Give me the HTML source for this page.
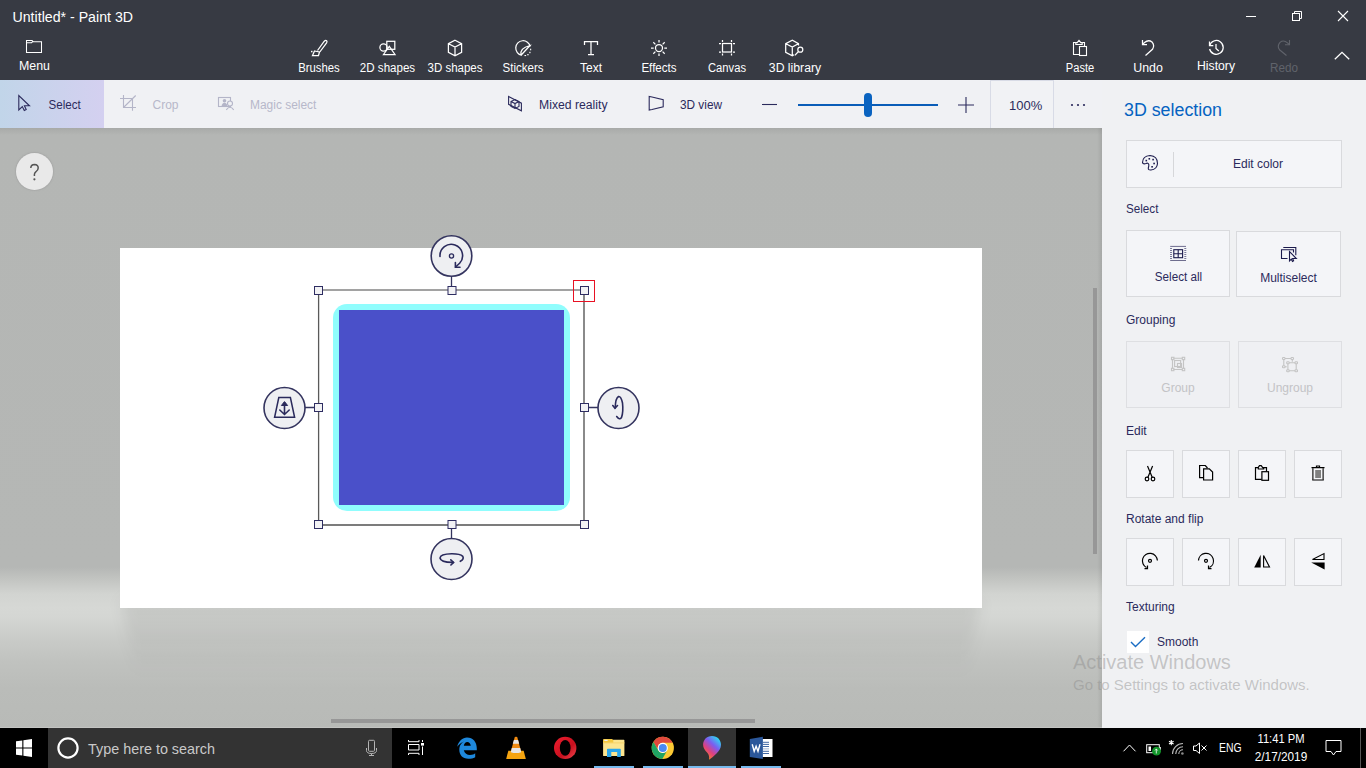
<!DOCTYPE html>
<html><head><meta charset="utf-8">
<style>
*{margin:0;padding:0;box-sizing:border-box}
html,body{width:1366px;height:768px;overflow:hidden;background:#b5b6b5;font-family:"Liberation Sans",sans-serif}
.a{position:absolute}
#top{left:0;top:0;width:1366px;height:80px;background:#373a43}
#tb{left:0;top:80px;width:1102px;height:48px;background:#f0f1f4}
#sel{left:0;top:80px;width:104px;height:48px;background:linear-gradient(to right,#c1d5e9,#d4d0f0)}
#zoombox{left:990px;top:80px;width:64px;height:48px;border:1px solid #d8dbe6;border-bottom:none;background:#f1f2f5}
#cv{left:0;top:128px;width:1102px;height:600px;overflow:hidden;
 background:linear-gradient(to bottom,#a8aaa8 0px,#b4b6b4 7px,#b5b7b5 439px,#c3c5c2 452px,#d2d4d1 466px,#d6d8d5 480px,#d4d6d3 490px,#c8cac7 514px,#c0c2bf 534px,#babcb9 560px,#b8bab7 600px)}
#canvas{left:120px;top:120px;width:862px;height:360px;background:#fff}
#panel{left:1102px;top:80px;width:264px;height:648px;background:#f0f1f3}
.card{position:absolute;background:#f4f5f8;border:1px solid #d9dadd}
.dcard{position:absolute;background:#eff0f3;border:1px solid #dedfe2}
#task{left:0;top:728px;width:1366px;height:40px;background:#000}
#search{left:48px;top:728px;width:344px;height:40px;background:#333}
#act{left:688px;top:728px;width:48px;height:40px;background:#333}
.ul{position:absolute;top:766px;height:2px;background:#76b9ed}
svg#ov{position:absolute;left:0;top:0;width:1366px;height:768px;overflow:visible}
text{font-family:"Liberation Sans",sans-serif}
</style></head><body>
<div id="top" class="a"></div>
<div id="tb" class="a"></div>
<div id="sel" class="a"></div>
<div id="zoombox" class="a"></div>
<div id="cv" class="a">
  <svg class="a" style="left:0;top:0" width="1102" height="600" viewBox="0 128 1102 600">
<defs><linearGradient id="shg" x1="0" y1="0" x2="0" y2="1"><stop offset="0" stop-color="#000" stop-opacity=".085"/><stop offset=".5" stop-color="#000" stop-opacity=".045"/><stop offset="1" stop-color="#000" stop-opacity="0"/></linearGradient>
<filter id="blr" x="-10%" y="-50%" width="120%" height="200%"><feGaussianBlur stdDeviation="7"/></filter></defs>
<polygon points="121,600 981,600 966,675 136,675" fill="url(#shg)" filter="url(#blr)"/>
</svg>
  <div id="canvas" class="a"></div>
  <div class="a" style="left:1093px;top:160px;width:4px;height:266px;background:#979797"></div>
  <div class="a" style="left:1097px;top:0;width:5px;height:600px;background:linear-gradient(to right,rgba(0,0,0,0),rgba(0,0,0,.08))"></div>
  <div class="a" style="left:331px;top:591px;width:424px;height:4px;background:#979797"></div>
  <div class="a" style="left:0;top:599px;width:1102px;height:1px;background:#c3c4c2"></div>
  <div class="a" style="left:16px;top:25px;width:37px;height:37px;border-radius:50%;background:#e9e9e9;box-shadow:0 0 1px 1px rgba(160,160,160,.5)"></div>
</div>
<div id="panel" class="a">
  <div class="card" style="left:24px;top:60px;width:216px;height:48px"></div>
  <div class="a" style="left:71px;top:72px;width:1px;height:25px;background:#d6d7da"></div>
  <div class="card" style="left:24px;top:150px;width:104px;height:67px"></div>
  <div class="card" style="left:134px;top:151px;width:105px;height:66px"></div>
  <div class="dcard" style="left:24px;top:261px;width:104px;height:67px"></div>
  <div class="dcard" style="left:136px;top:261px;width:104px;height:67px"></div>
  <div class="card" style="left:24px;top:370px;width:48px;height:48px"></div>
  <div class="card" style="left:80px;top:370px;width:48px;height:48px"></div>
  <div class="card" style="left:136px;top:370px;width:48px;height:48px"></div>
  <div class="card" style="left:192px;top:370px;width:48px;height:48px"></div>
  <div class="card" style="left:24px;top:458px;width:48px;height:48px"></div>
  <div class="card" style="left:80px;top:458px;width:48px;height:48px"></div>
  <div class="card" style="left:136px;top:458px;width:48px;height:48px"></div>
  <div class="card" style="left:192px;top:458px;width:48px;height:48px"></div>
  <div class="a" style="left:25px;top:551px;width:22px;height:22px;background:#fff"></div>
</div>
<div id="task" class="a"></div>
<div id="search" class="a"></div>
<div id="act" class="a"></div>
<div class="ul" style="left:594px;width:40px"></div>
<div class="ul" style="left:643px;width:40px"></div>
<div class="ul" style="left:688px;width:48px"></div>
<div class="ul" style="left:741px;width:40px"></div>

<svg id="ov" viewBox="0 0 1366 768">
<!-- ===== title bar text ===== -->
<g fill="#fff">
<text x="12.5" y="22" font-size="14" textLength="120.5" lengthAdjust="spacingAndGlyphs">Untitled* - Paint 3D</text>
<g font-size="12" text-anchor="middle">
<text x="34.5" y="70" textLength="31" lengthAdjust="spacingAndGlyphs">Menu</text>
<text x="319" y="72" textLength="41.5" lengthAdjust="spacingAndGlyphs">Brushes</text>
<text x="387.5" y="72" textLength="55.3" lengthAdjust="spacingAndGlyphs">2D shapes</text>
<text x="455" y="72" textLength="55" lengthAdjust="spacingAndGlyphs">3D shapes</text>
<text x="523" y="72" textLength="41" lengthAdjust="spacingAndGlyphs">Stickers</text>
<text x="591" y="72" textLength="22" lengthAdjust="spacingAndGlyphs">Text</text>
<text x="659" y="72" textLength="35.2" lengthAdjust="spacingAndGlyphs">Effects</text>
<text x="727" y="72" textLength="38" lengthAdjust="spacingAndGlyphs">Canvas</text>
<text x="795" y="72" textLength="52.3" lengthAdjust="spacingAndGlyphs">3D library</text>
<text x="1080" y="72" textLength="28.4" lengthAdjust="spacingAndGlyphs">Paste</text>
<text x="1148" y="72" textLength="29.6" lengthAdjust="spacingAndGlyphs">Undo</text>
<text x="1216" y="70" textLength="38" lengthAdjust="spacingAndGlyphs">History</text>
<text x="1284" y="72" fill="#60636b" textLength="28" lengthAdjust="spacingAndGlyphs">Redo</text>
</g>
</g>

<!-- ===== top icons (white) ===== -->
<g fill="none" stroke="#fff" stroke-width="1.25">
<!-- menu folder -->
<path d="M26.5,52.5 V40.5 H32 L33.2,41.7 H41.5 V52.5 Z M26.5,42.7 H31.6 L32.6,41.7" stroke-width="1.05"/>
<!-- brush -->
<path d="M317.5,50.5 L324.3,41.2 Q325.6,39.8 326.6,40.7 Q327.4,41.6 326.6,42.9 L319.8,52"/>
<path d="M314.5,51 L319.5,52 L318.5,55.5 L312.5,55.5 Z"/>
<!-- 2D shapes -->
<rect x="386.8" y="41.3" width="8" height="8"/>
<circle cx="383.5" cy="47.5" r="3.6"/>
<path d="M389.3,46.3 L383.5,54.5 H395 Z"/>
<!-- 3D shapes -->
<path d="M455,40.3 L461.6,43.6 V52.4 L455,55.7 L448.4,52.4 V43.6 Z M448.6,43.7 L455,47 L461.4,43.7 M455,47 V55.5"/>
<!-- stickers -->
<path d="M521.7,55.2 A7.3,7.3 0 1 1 530.2,46.5"/>
<path d="M521,55.2 Q519.5,48 530,45.5 L521,55.2"/>
<!-- text T -->
<path d="M584.5,45 V41.5 H597.5 V45 M591,41.5 V54.5 M588,54.5 H594"/>
<!-- effects sun -->
<circle cx="659" cy="48" r="3.5"/>
<path d="M659,40 V42.5 M659,53.5 V56 M651,48 H653.7 M664.3,48 H667 M653.3,42.3 L655.4,44.4 M662.6,51.6 L664.7,53.7 M664.7,42.3 L662.6,44.4 M655.4,51.6 L653.3,53.7"/>
<!-- canvas -->
<rect x="722.5" y="43.5" width="9" height="8.5"/>
<path d="M722.5,40 V42 M731.5,40 V42 M722.5,53.5 V55.5 M731.5,53.5 V55.5 M719,43.5 H721 M733,43.5 H735 M719,52 H721 M733,52 H735"/>
<!-- 3d library -->
<path d="M798.5,45.5 V43.6 L792.3,40.3 L785.7,43.6 V52.4 L792.3,55.7 L794,54.8 M785.9,43.7 L792.3,47 L798.3,43.7 M792.3,47 V55.5"/>
<circle cx="800.3" cy="49.7" r="2.5"/>
<path d="M798.5,51.5 L794.8,55.4"/>
<!-- paste -->
<path d="M1079.5,54.5 H1073.5 V42.5 H1075.8 M1082.2,42.5 H1084.5 V46.3" stroke-width="1.1"/>
<path d="M1075.8,44.5 V42.6 H1077.2 L1079,40.4 L1080.8,42.6 H1082.2 V44.5 Z" stroke-width="1.1"/>
<rect x="1079.5" y="46.5" width="7" height="9" stroke-width="1.1"/>
<!-- undo -->
<path d="M1142.5,40 V44.5 H1147"/>
<path d="M1142.8,44.2 L1144.5,42.5 Q1148.5,39.3 1152,42 Q1155,45.5 1152.5,49.3 L1145.5,55.5"/>
<!-- history -->
<path d="M1209.6,45.8 A6.9,6.9 0 1 1 1209.6,49"/>
<path d="M1209.5,41.5 V45.6 H1213.3"/>
<path d="M1216,44 V48.5 L1218.8,51"/>
<!-- chevron -->
<path d="M1334.8,59.3 L1342,52.3 L1349.2,59.3" stroke-width="1.3"/>
<!-- window controls -->
<path d="M1246,16.5 H1256" stroke-width="1"/>
<rect x="1292.5" y="13.5" width="7" height="7" stroke-width="1"/>
<path d="M1294.5,13.5 V11.5 H1301.5 V18.5 H1299.5" stroke-width="1"/>
<path d="M1338,11 L1348,21 M1348,11 L1338,21" stroke-width="1.1"/>
</g>
<g fill="none" stroke="#60636b" stroke-width="1.1">
<path d="M1289.5,40 V44.8 H1285"/>
<path d="M1289.2,44.5 L1287.5,42.8 Q1283.5,39.4 1280,42.3 Q1276.8,46 1279.5,49.8 L1286.5,55.5"/>
</g>
<g fill="#fff"><rect x="311" y="50.8" width="1.5" height="1.5"/></g>

<g fill="#fff"><rect x="524.5" y="55" width="1.6" height="1.1"/><rect x="527.3" y="54" width="1.3" height="1.3"/><rect x="529.3" y="51.8" width="1.2" height="1.4"/><rect x="530.1" y="48.7" width="1.1" height="1.6"/></g>
<!-- ===== light toolbar ===== -->
<g font-size="12" fill="#2b2a5c">
<text x="48.5" y="109.2" textLength="32.2" lengthAdjust="spacingAndGlyphs">Select</text>
<text x="539" y="109.2" textLength="68.5" lengthAdjust="spacingAndGlyphs">Mixed reality</text>
<text x="680" y="109.2" textLength="42" lengthAdjust="spacingAndGlyphs">3D view</text>
<text x="1009" y="109.5" font-size="13">100%</text>
</g>
<g font-size="12" fill="#b7b8ca">
<text x="152.5" y="109.2" textLength="26" lengthAdjust="spacingAndGlyphs">Crop</text>
<text x="250" y="109.2" textLength="66.4" lengthAdjust="spacingAndGlyphs">Magic select</text>
</g>
<g fill="none" stroke="#2b2a5c" stroke-width="1.1">
<path d="M18.8,95.5 V110 L22.3,106.6 L24.3,110.5 L26.2,109.6 L24.4,105.8 H29.5 Z"/>
<path d="M508.6,96.5 L521.4,103.2 V110.8 L508.6,104.3 Z"/>
<path d="M511,101.5 L515,99.6 L519,101.6 V106.5 L515,108.4 L511,106.4 Z M511,101.6 L515,103.6 L519,101.6 M515,103.6 V108.3"/>
<path d="M649.2,96.5 V110 L652,109.5 L663.2,106.8 V99.6 L652,97 Z"/>
<path d="M762,104.5 H777"/>
<path d="M966,97 V113 M958,105 H974"/>
</g>
<g fill="#2b2a5c"><circle cx="1072" cy="105" r="1.1"/><circle cx="1078" cy="105" r="1.1"/><circle cx="1084" cy="105" r="1.1"/></g>
<g fill="none" stroke="#b4b5c8" stroke-width="1.1">
<path d="M120,98.5 H132.5 V110.8 M123.5,95 V107.5 H136 M124,107 L135.7,95.5"/>
<rect x="218.5" y="97.5" width="12" height="9"/>
</g>
<g fill="#b4b5c8"><circle cx="224.5" cy="100.8" r="1.8"/><path d="M221.5,106.5 Q222,102.8 224.5,102.8 Q227,102.8 227.5,106.5 Z"/></g>
<circle cx="230" cy="103.5" r="2.5" fill="#f0f1f4" stroke="#b4b5c8" stroke-width="1.1"/>
<path d="M226.3,109.8 Q230,104.8 233.7,109.8" fill="none" stroke="#b4b5c8" stroke-width="1.1"/>
<path d="M798,105 H938" stroke="#0a5db8" stroke-width="2.2"/>
<rect x="864" y="93" width="8" height="24" rx="4" fill="#0a63c0"/>

<!-- ===== help ===== -->
<path d="M30.8,168 Q31,164.6 34.5,164.6 Q38.2,164.8 38.2,168 Q38.2,170.3 35.8,171.8 Q34.4,172.8 34.4,174.5 V176" fill="none" stroke="#555" stroke-width="1.5"/><circle cx="34.4" cy="179.3" r="1.1" fill="#555"/>

<!-- ===== selection object ===== -->
<rect x="333" y="304" width="237" height="207" rx="14" fill="#90fdfd"/>
<rect x="339" y="310" width="225" height="195" fill="#4a50c9"/>
<g fill="none">
<path d="M318,290 H584" stroke="#a2a2a2" stroke-width="2"/>
<path d="M318,525 H584" stroke="#7c7c7c" stroke-width="2"/>
<path d="M318.6,290 V525" stroke="#5a5a5a" stroke-width="1.3"/>
<path d="M584,290 V525" stroke="#8a8a8a" stroke-width="2"/>
</g>
<g stroke="#34345f" stroke-width="1.3" fill="none">
<path d="M451.5,276.5 V286 M451.5,529 V538.5 M305,407.5 H314.5 M589,407.5 H598"/>
</g>
<g fill="#eeeff2" stroke="#34345f" stroke-width="1.6">
<circle cx="451.5" cy="256" r="20.3"/>
<circle cx="284.5" cy="408" r="20.5"/>
<circle cx="618.5" cy="408" r="20.5"/>
<circle cx="451.5" cy="559" r="20.5"/>
</g>
<g fill="#f2f2f4" stroke="#2e2d62" stroke-width="1">
<rect x="314.5" y="286.5" width="8" height="8"/>
<rect x="448" y="286.5" width="8" height="8"/>
<rect x="580.5" y="286.5" width="8" height="8"/>
<rect x="314.5" y="403.5" width="8" height="8"/>
<rect x="580.5" y="403.5" width="8" height="8"/>
<rect x="314.5" y="520.5" width="8" height="8"/>
<rect x="448" y="520.5" width="8" height="8"/>
<rect x="580.5" y="520.5" width="8" height="8"/>
</g>
<rect x="573.5" y="280.5" width="21" height="21" fill="none" stroke="#e81123" stroke-width="1"/>
<g fill="none" stroke="#2a2a5c" stroke-width="1.6" stroke-linecap="round">
<!-- top rotate -->
<path d="M440,256.5 A11.3,11.3 0 1 1 459.6,263.3 L455.6,267"/>
<circle cx="451.5" cy="256" r="2.1" stroke-width="1.3"/>
<path d="M455.4,262.6 V267.2 H460" />
<!-- left trapezoid -->
<path d="M278.8,397.5 H290.4 L294.6,417.3 H274.6 Z" stroke-width="1.5"/>
<path d="M284.5,403 V414 M279.8,410 L284.5,414.5 L289.2,410"/><path d="M281.6,405.2 L284.5,401.6 L287.4,405.2 Z" fill="#2a2a5c" stroke-width="1"/>
<!-- right rotate -->
<path d="M616.7,416.5 Q619.5,420.5 621.5,417.5 Q623.5,412 622.5,403 Q621,396 618.5,396.5 Q615.5,398 615.2,408"/>
<path d="M612.8,405.5 L615,408.3 L617.5,405.5"/>
<!-- bottom rotate -->
<path d="M460.3,561.3 Q464.3,559 462.8,556.3 Q460,553.7 451.5,553.8 Q440.5,554 440,558 Q440.8,562.6 453.3,562.4"/>
<path d="M450.8,559.9 L453.6,562.4 L450.9,565"/>
</g>

<!-- ===== panel ===== -->
<text x="1124" y="116" font-size="18" fill="#0563c1" textLength="98" lengthAdjust="spacingAndGlyphs">3D selection</text>
<g font-size="12" fill="#2b2a5c">
<text x="1258" y="168" text-anchor="middle">Edit color</text>
<text x="1126" y="213" textLength="32.4" lengthAdjust="spacingAndGlyphs">Select</text>
<text x="1178.5" y="281" text-anchor="middle" textLength="47.3" lengthAdjust="spacingAndGlyphs">Select all</text>
<text x="1288.5" y="282" text-anchor="middle">Multiselect</text>
<text x="1126" y="324.2">Grouping</text>
<text x="1126" y="434.8">Edit</text>
<text x="1126" y="523">Rotate and flip</text>
<text x="1126" y="611">Texturing</text>
<text x="1157" y="646">Smooth</text>
</g>
<g font-size="12" fill="#c3c3c6" text-anchor="middle">
<text x="1178" y="392">Group</text>
<text x="1290" y="392">Ungroup</text>
</g>
<g fill="none" stroke="#1b1a4c" stroke-width="1.1">
<!-- palette -->
<path d="M1150,155.5 Q1157.5,156 1157.5,163.5 Q1157,169.5 1151,170 Q1148,170.3 1148.3,168 Q1149,166 1148.8,164.5 Q1148,162.5 1146,163.5 Q1143,164.5 1142.5,162.5 Q1142.7,156 1150,155.5 Z"/>
</g>
<g fill="#1b1a4c">
<rect x="1145.5" y="159.8" width="1.6" height="1.6"/><rect x="1148.5" y="158" width="1.6" height="1.6"/><rect x="1152.3" y="158.8" width="1.6" height="1.6"/><rect x="1153.3" y="162.7" width="1.6" height="1.6"/><rect x="1151.3" y="166" width="1.6" height="1.6"/>
</g>
<!-- select all -->
<g fill="none" stroke="#1b1a4c" stroke-width="1.1">
<rect x="1173.8" y="249.7" width="8.8" height="8"/>
<path d="M1178.2,249.7 V257.7 M1173.8,253.7 H1182.6"/>
</g>
<g fill="none" stroke="#6e6d8e" stroke-width="1">
<path d="M1170.2,246.4 H1186 M1170.2,260.5 H1186"/>
<path d="M1170,248.5 H1172 M1170,250.5 H1172 M1170,252.5 H1172 M1170,254.5 H1172 M1170,256.5 H1172 M1170,258.5 H1172 M1184.3,248.5 H1186.3 M1184.3,250.5 H1186.3 M1184.3,252.5 H1186.3 M1184.3,254.5 H1186.3 M1184.3,256.5 H1186.3 M1184.3,258.5 H1186.3" stroke-width=".9"/>
</g>
<!-- multiselect -->
<g fill="none" stroke="#1b1a4c" stroke-width="1.1">
<path d="M1283.3,247.5 H1295.8 V255.3"/>
<path d="M1287.5,258.5 H1281.5 V249.7 H1293.5 V252.5"/>
<path d="M1289.5,251.5 V261 L1291.3,259.2 L1292.5,261.4 L1293.6,260.8 L1292.6,258.5 H1296.3 Z"/>
</g>
<!-- group (disabled) -->
<g fill="none" stroke="#c4c4c4" stroke-width="1.1">
<path d="M1173.5,358.3 H1182.5 M1173.5,369.5 H1182.5 M1172.5,359.3 V368.5 M1183.5,359.3 V368.5"/>
<rect x="1171.5" y="357.3" width="2.4" height="2.4"/><rect x="1182.3" y="357.3" width="2.4" height="2.4"/>
<rect x="1171.5" y="368.3" width="2.4" height="2.4"/><rect x="1182.3" y="368.3" width="2.4" height="2.4"/>
<rect x="1174.6" y="360.5" width="6" height="6"/>
<rect x="1177.5" y="363.5" width="4" height="4"/>
</g>
<!-- ungroup (disabled) -->
<g fill="none" stroke="#c4c4c4" stroke-width="1.1">
<rect x="1282.5" y="357.5" width="2.5" height="2" rx=".8"/><rect x="1291" y="357.5" width="2.5" height="2" rx=".8"/>
<rect x="1282.5" y="365.8" width="2.5" height="2" rx=".8"/>
<rect x="1286.7" y="361.8" width="2.5" height="2" rx=".8"/><rect x="1295" y="361.8" width="2.5" height="2" rx=".8"/>
<rect x="1286.7" y="369.8" width="2.5" height="2" rx=".8"/><rect x="1295" y="369.8" width="2.5" height="2" rx=".8"/>
<path d="M1285,358.5 H1291 M1283.8,359.5 V365.8 M1292.3,359.5 V361.8 M1289.2,362.8 H1295 M1287.9,363.8 V369.8 M1296.2,363.8 V369.8 M1289.2,370.8 H1295 M1285,366.8 H1286.7"/>
</g>
<!-- edit icons -->
<g fill="none" stroke="#000" stroke-width="1.2">
<path d="M1147.5,466 L1152.2,477.3 M1152.6,466 L1147.9,477.3"/>
<circle cx="1147" cy="479" r="1.8"/><circle cx="1153" cy="479" r="1.8"/>
<path d="M1203.5,477.6 H1199.6 V465.5 H1205.3 L1207.5,468"/>
<path d="M1203.6,468.8 H1209.3 L1212.6,472 V480 H1203.6 Z"/>
<path d="M1261.7,479.3 H1255.5 V467.6 H1258.1 L1259.5,465.6 H1261.2 L1262.7,467.6 H1266.5 V471.5 M1258.3,467.8 V469 H1263.7 V467.8"/>
<rect x="1261.9" y="471.7" width="6.6" height="8.6"/>
<path d="M1311.5,467.6 H1324.5 M1316.5,467.6 V466 H1319.5 V467.6 M1312.8,467.6 V480 H1323.2 V467.6"/>
</g>
<rect x="1315.2" y="470" width="5.8" height="8" fill="#808080"/>
<path d="M1313,468 V479.5 M1323,468 V479.5" stroke="#808080" stroke-width="1"/>
<!-- rotate icons -->
<g fill="none" stroke="#000" stroke-width="1.2">
<path d="M1157.4,560.6 A7.5,7.5 0 1 0 1146.5,567.5"/>
<path d="M1144.5,568.7 H1147.5 V565.5"/>
<circle cx="1150" cy="560.8" r="1.5"/>
<path d="M1198.5,560.6 A7.5,7.5 0 1 1 1209.5,567.5"/>
<path d="M1211.5,568.7 H1208.5 V565.5"/>
<circle cx="1206" cy="560.8" r="1.5"/>
</g>
<path d="M1254.2,567.4 L1260.7,554.8 V567.4 Z" fill="#000"/>
<path d="M1263.6,555.5 L1269.5,567 H1263.6 Z" fill="none" stroke="#000" stroke-width="1.1"/>
<path d="M1311.2,562.5 H1324.6 V569.5 Z" fill="#000"/>
<path d="M1312.5,559.5 L1324,553.6 V559.5 Z" fill="none" stroke="#000" stroke-width="1.1"/>
<!-- checkbox -->
<path d="M1131,642 L1135.5,646.6 L1145,637.3" fill="none" stroke="#1a6dc4" stroke-width="1.4"/>
<!-- activate windows -->
<g fill="#8c8c8c" fill-opacity=".45">
<text x="1073" y="669" font-size="20">Activate Windows</text>
<text x="1073" y="690" font-size="15">Go to Settings to activate Windows.</text>
</g>

<!-- ===== taskbar ===== -->
<g fill="#fff">
<path d="M16,741.3 L22.3,740.4 V747.4 H16 Z M23.4,740.3 L32,739 V747.4 H23.4 Z M16,748.5 H22.3 V755.5 L16,754.7 Z M23.4,748.5 H32 V757 L23.4,755.7 Z"/>
</g>
<circle cx="68" cy="748" r="9.6" fill="none" stroke="#fff" stroke-width="2.2"/>
<text x="88" y="754" font-size="15" fill="#c9c9c9" textLength="127" lengthAdjust="spacingAndGlyphs">Type here to search</text>
<g fill="none" stroke="#b4b4b4" stroke-width="1">
<rect x="368.5" y="740.3" width="6" height="11" rx="1"/>
<path d="M366.5,748 V750.5 Q366.5,753.5 371.5,753.5 Q376.5,753.5 376.5,750.5 V748 M371.5,753.5 V755.5 M369,755.5 H374"/>
</g>
<g fill="none" stroke="#fff" stroke-width="1">
<path d="M408.5,740 V741.7 H419 V740 M408.5,744.5 H419 V750 H408.5 Z M408.5,755 V753.3 H419 V755 M422.5,740 V742 M422.5,746.5 V755"/>
</g>
<rect x="421" y="743" width="3" height="2.6" fill="#fff"/>
<!-- edge -->
<path fill-rule="evenodd" fill="#1e88dc" d="M457.2,746.8 C458.5,741 462.5,737.4 467,737.4 C473,737.4 476.8,742 476.8,748.5 L476.8,750.3 H463.8 C464.5,753.5 467,755 470,755 C472.5,755 474,754.3 475.2,753.3 L475.2,757.2 C473.3,758.3 471,758.8 468.3,758.8 C462.5,758.8 459.3,754.8 459.3,749.8 C459.3,745.5 461.5,742.5 464.5,741.5 C461.5,742.3 459,744.5 457.2,746.8 Z M463.8,745.8 H470.8 C470.5,743.3 469,742 467.3,742 C465.5,742 464.2,743.5 463.8,745.8 Z"/>
<!-- vlc -->
<path d="M508.3,750.7 H523.7 L525.8,758.9 H506.2 Z" fill="#f5a410"/>
<path d="M514.8,737 Q516,736.3 517.2,737 L521.3,752 Q516,754.5 510.7,752 Z" fill="#ee8a12"/>
<path d="M513.9,740 H518.1 L519.2,743.8 H512.8 Z M511.8,748.1 H520.2 L521.2,752.2 Q516,754 510.8,752.2 Z" fill="#e6e6e6"/>
<!-- opera -->
<defs><linearGradient id="opg" x1="0" y1="0" x2="1" y2="1"><stop offset="0" stop-color="#f01e30"/><stop offset=".6" stop-color="#c8101e"/><stop offset="1" stop-color="#f04850"/></linearGradient></defs>
<ellipse cx="565.2" cy="747.9" rx="11.2" ry="11.2" fill="url(#opg)"/>
<ellipse cx="565.2" cy="747.9" rx="5.4" ry="7.9" fill="#000"/>
<!-- explorer -->
<rect x="603.1" y="739.8" width="21.3" height="16.2" rx=".6" fill="#fde58f"/>
<path d="M603.1,743 V739.6 Q603.1,738.9 604,738.9 H612 L613.3,740.3 V743 Z" fill="#f5c940"/>
<rect x="604.3" y="739.8" width="3.3" height="1.2" fill="#f2f2f2"/>
<rect x="603.1" y="742.4" width="21.3" height="1" fill="#f7d36a"/>
<path d="M607,756.9 V749.6 Q607,748.8 607.8,748.8 H620 Q620.8,748.8 620.8,749.6 V756.9 H617.2 V752 H611.3 V756.9 Z" fill="#2aa6ec"/>
<!-- chrome -->
<circle cx="662.8" cy="747.9" r="11.1" fill="#fcc934"/>
<path d="M662.8,742.8 L672.66,742.8 A11.1,11.1 0 0 0 653.45,741.9 L658.38,750.45 A5.1,5.1 0 0 1 662.8,742.8 Z" fill="#e0493d"/>
<path d="M658.38,750.45 L653.45,741.9 A11.1,11.1 0 0 0 662.3,759 L667.22,750.45 A5.1,5.1 0 0 1 658.38,750.45 Z" fill="#1fa463"/>
<circle cx="662.8" cy="747.9" r="5.1" fill="#fff"/>
<circle cx="662.8" cy="747.9" r="4" fill="#4a8af4"/>
<!-- paint 3d -->
<defs>
<linearGradient id="p3" x1="0.85" y1="0.05" x2="0.2" y2="0.95">
<stop offset="0" stop-color="#25e3f3"/><stop offset=".38" stop-color="#7b5df0"/><stop offset=".68" stop-color="#e0407e"/><stop offset=".9" stop-color="#f07040"/><stop offset="1" stop-color="#f5a300"/>
</linearGradient>
</defs>
<path d="M712,736 C717.5,736 721,740 721,744.8 C721,748.5 719,751 716.5,753.5 C714,756 711.5,758 709,759.8 C709.5,757 709,754.8 707.3,752.8 C705,750.3 703.1,748 703.1,744.8 C703.1,740 706.5,736 712,736 Z" fill="url(#p3)"/>
<!-- word -->
<rect x="762" y="739" width="10.5" height="18" fill="#fff"/>
<path d="M763,742.3 H769 M763,744.4 H769 M763,746.5 H769 M763,751.3 H769 M763,753.5 H769" stroke="#2b579a" stroke-width="0.9"/>
<path d="M763,748.9 H769" stroke="#9fb2d0" stroke-width="1"/>
<path d="M749.8,739 L762.9,736.8 V758.9 L749.8,757 Z" fill="#2b579a"/>
<path d="M752.2,744.2 L754.2,751.2 L756.1,746.3 L758,751.2 L760,744.2" fill="none" stroke="#fff" stroke-width="1.4"/>
<!-- tray -->
<g fill="none" stroke="#fff" stroke-width="1">
<path d="M1123.5,751.3 L1129.5,745 L1135.5,751.3"/>
<rect x="1146.7" y="744.7" width="12.6" height="8" />
<path d="M1160.3,747 V750.3"/>
<path d="M1193.5,746 H1196 L1199.5,743 V753.5 L1196,750.5 H1193.5 Z M1201.5,745.5 L1206.5,750.5 M1206.5,745.5 L1201.5,750.5"/>
<path d="M1326,740.5 H1341 V751.5 H1336 L1333.5,755 L1331,751.5 H1326 Z"/>
</g>
<rect x="1148.5" y="746.5" width="2.5" height="4.5" fill="#fff"/>
<circle cx="1156.5" cy="751.2" r="4.4" fill="#12962a"/>
<path d="M1156.3,748.8 V753.5 M1155,750.5 L1156.3,749 L1157.6,750.5" stroke="#fff" stroke-width=".8" fill="none"/>
<g fill="none" stroke="#b8b8b8" stroke-width="1.1">
<path d="M1178.8,754 A4.2,4.2 0 0 1 1183,749.8 M1175.7,754 A7.3,7.3 0 0 1 1183,746.7 M1172.5,754 A10.5,10.5 0 0 1 1183,743.5"/>
</g>
<circle cx="1182.4" cy="753.5" r="1.3" fill="#8a8a8a"/>
<path d="M1171.3,740 V745.2 M1169,741.3 L1173.6,743.9 M1173.6,741.3 L1169,743.9" stroke="#fff" stroke-width="1.1"/>
<g fill="#fff" font-size="12">
<text x="1219" y="752" textLength="22.5" lengthAdjust="spacingAndGlyphs">ENG</text>
<text x="1281" y="743" text-anchor="middle" textLength="47" lengthAdjust="spacingAndGlyphs">11:41 PM</text>
<text x="1281" y="760.5" text-anchor="middle" textLength="52.5" lengthAdjust="spacingAndGlyphs">2/17/2019</text>
</g>
<rect x="1360" y="728" width="1" height="40" fill="#555"/>
</svg>
</body></html>
